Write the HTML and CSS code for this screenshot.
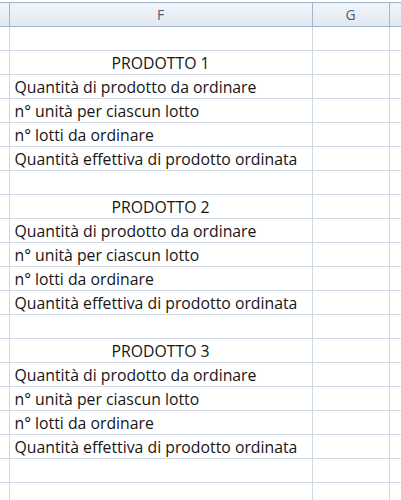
FILE: index.html
```html
<!DOCTYPE html>
<html lang="it">
<head>
  <meta charset="UTF-8">
  <title>Foglio prodotti</title>
  <link rel="stylesheet" href="styles.css">
</head>
<body>

  <table class="sheet">
    <colgroup>
      <col class="col-edge">
      <col class="col-f">
      <col class="col-g">
      <col class="col-rest">
    </colgroup>
    <thead>
      <tr>
        <th></th><th>F</th><th>G</th><th></th>
      </tr>
    </thead>
    <tbody>
      <tr><td></td><td></td><td></td><td></td></tr>
      <tr><td></td><td class="title">PRODOTTO 1</td><td></td><td></td></tr>
      <tr><td></td><td>Quantità di prodotto da ordinare</td><td></td><td></td></tr>
      <tr><td></td><td>n° unità per ciascun lotto</td><td></td><td></td></tr>
      <tr><td></td><td>n° lotti da ordinare</td><td></td><td></td></tr>
      <tr><td></td><td>Quantità effettiva di prodotto ordinata</td><td></td><td></td></tr>
      <tr><td></td><td></td><td></td><td></td></tr>
      <tr><td></td><td class="title">PRODOTTO 2</td><td></td><td></td></tr>
      <tr><td></td><td>Quantità di prodotto da ordinare</td><td></td><td></td></tr>
      <tr><td></td><td>n° unità per ciascun lotto</td><td></td><td></td></tr>
      <tr><td></td><td>n° lotti da ordinare</td><td></td><td></td></tr>
      <tr><td></td><td>Quantità effettiva di prodotto ordinata</td><td></td><td></td></tr>
      <tr><td></td><td></td><td></td><td></td></tr>
      <tr><td></td><td class="title">PRODOTTO 3</td><td></td><td></td></tr>
      <tr><td></td><td>Quantità di prodotto da ordinare</td><td></td><td></td></tr>
      <tr><td></td><td>n° unità per ciascun lotto</td><td></td><td></td></tr>
      <tr><td></td><td>n° lotti da ordinare</td><td></td><td></td></tr>
      <tr><td></td><td>Quantità effettiva di prodotto ordinata</td><td></td><td></td></tr>
      <tr><td></td><td></td><td></td><td></td></tr>
      <tr><td></td><td></td><td></td><td></td></tr>
    </tbody>
  </table>

</body>
</html>
```

FILE: styles.css
```css
body {
  margin: 0;
  padding-top: 2px;
  background: white;
  font-family: "Open Sans", Lato, sans-serif;
  overflow: hidden;
}
.sheet {
  border-collapse: collapse;
  table-layout: fixed;
  width: 401px;
}
.col-edge { width: 9px; }
.col-f { width: 303px; }
.col-g { width: 77px; }
.col-rest { width: 12px; }
th {
  height: 23px;
  padding: 0;
  background: linear-gradient(#f1f4f9, #e2e8f1);
  border: 1px solid #9eb6ce;
  border-left: 1px solid #c5d2df;
  color: #4c5d73;
  font-size: 14px;
  font-weight: normal;
}
th:first-child {
  border-left: none;
}
td {
  height: 22px;
  padding: 0 0 1px 5px;
  border: 1px solid #d0d7e5;
  font-size: 15.8px;
  line-height: 20px;
  color: #161616;
  white-space: nowrap;
  overflow: hidden;
  vertical-align: bottom;
}
td:first-child {
  border-left: none;
}
td.title {
  text-align: center;
  padding-left: 0;
}
```
